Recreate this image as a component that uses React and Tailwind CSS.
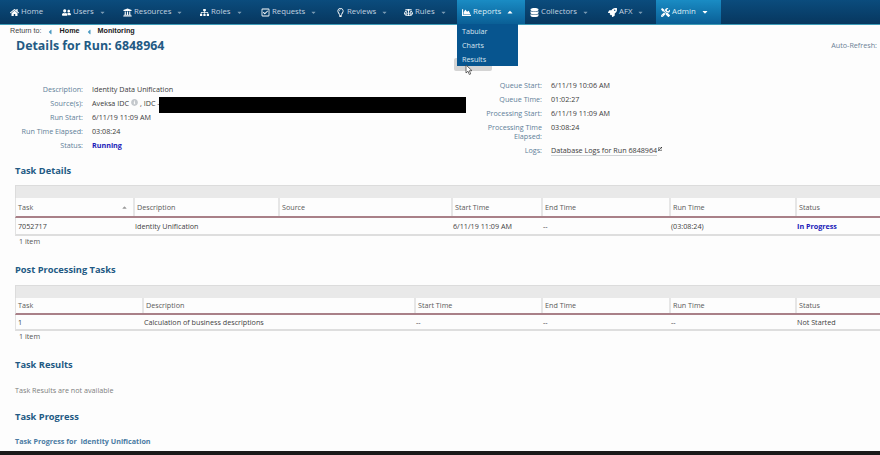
import React from 'react';
import {
  FaHome, FaUserFriends, FaUniversity, FaSitemap, FaRegCheckSquare, FaRegLightbulb,
  FaBalanceScale, FaChartArea, FaDatabase, FaRocket, FaTools, FaCaretDown, FaCaretUp, FaCaretLeft,
  FaInfoCircle, FaExternalLinkAlt,
} from 'react-icons/fa';

const navItems = [
  { label: 'Home', icon: FaHome, width: 'w-[52px]', noCaret: true },
  { label: 'Users', icon: FaUserFriends, width: 'w-[61px]' },
  { label: 'Resources', icon: FaUniversity, width: 'w-[77px]' },
  { label: 'Roles', icon: FaSitemap, width: 'w-[61px]' },
  { label: 'Requests', icon: FaRegCheckSquare, width: 'w-[75px]' },
  { label: 'Reviews', icon: FaRegLightbulb, width: 'w-[68px]' },
  { label: 'Rules', icon: FaBalanceScale, width: 'w-[58px]' },
  { label: 'Reports', icon: FaChartArea, width: 'w-[68px]', active: true, open: true },
  { label: 'Collectors', icon: FaDatabase, width: 'w-[78px]' },
  { label: 'AFX', icon: FaRocket, width: 'w-[53px]' },
  { label: 'Admin', icon: FaTools, width: 'w-[65px]', active: true },
];

const leftMeta = [
  ['Description:', 'Identity Data Unification'],
  ['Source(s):', 'source'],
  ['Run Start:', '6/11/19 11:09 AM'],
  ['Run Time Elapsed:', '03:08:24'],
  ['Status:', 'Running'],
];

const rightMeta = [
  ['Queue Start:', '6/11/19 10:06 AM'],
  ['Queue Time:', '01:02:27'],
  ['Processing Start:', '6/11/19 11:09 AM'],
  ['Processing Time\nElapsed:', '03:08:24', 'h-[23px]'],
  ['Logs:', 'logs'],
];

const NavItem = ({ item }) => {
  const Icon = item.icon;
  return (
    <div className={`${item.width} h-full shrink-0 flex items-center pl-[5px] gap-[2px] text-[7.8px] ${item.active ? 'bg-gradient-to-b from-[#1a8cc4] to-[#0a5f96] text-[#dcecf6]' : 'text-[#c3d3e0]'}`}>
      <Icon className="text-[9px] text-white" />
      <span>{item.label}</span>
      {!item.noCaret && (item.active
        ? (item.open
          ? <FaCaretUp className="text-[8px] text-white ml-[3px]" />
          : <FaCaretDown className="text-[8px] text-white ml-[3px]" />)
        : <FaCaretDown className="text-[7px] text-[#7c9cb5] ml-[3px]" />)}
    </div>
  );
};

const MetaValue = ({ value }) => {
  if (value === 'source') {
    return (
      <div className="flex items-start whitespace-nowrap">
        <span>Aveksa IDC</span>
        <FaInfoCircle className="text-[7px] text-[#c4c8cc] mx-[2px] mt-[1px] shrink-0" />
        <span>, IDC -</span>
        <div className="h-4 w-[307px] bg-black -ml-[1px] -mt-[1px]"></div>
      </div>
    );
  }
  if (value === 'logs') {
    return (
      <div className="flex items-start">
        <span className="border-b border-[#cfd3d6]">Database Logs for Run 6848964</span>
        <FaExternalLinkAlt className="text-[4px] text-[#333333] ml-[1px] mt-[2px]" />
      </div>
    );
  }
  if (value === 'Running') return <span className="font-bold text-[#2019b8]">Running</span>;
  return <span>{value}</span>;
};

const Meta = ({ rows, labelWidth }) => (
  <div className="flex flex-col">
    {rows.map(([label, value, height]) => (
      <div key={label} className={`flex ${height || 'h-[14px]'}`}>
        <div className={`${labelWidth} shrink-0 text-right whitespace-pre-line text-[#5f7f99] leading-[9px] pt-[1px]`}>{label}</div>
        <div className="ml-[9px] text-[#3c3c3c] leading-[10px]">
          <MetaValue value={value} />
        </div>
      </div>
    ))}
  </div>
);

const DataTable = ({ cols, columns, row, sortable, headerHeight, rowHeight }) => (
  <div className="ml-[15px]">
    <div className="h-[13px] bg-[#e9e9e9] border-t border-l border-[#dcdcdc]"></div>
    <div className={`grid ${cols} ${headerHeight} items-center border-l border-[#e2e2e2] border-b-2 border-b-[#a98088] text-[#5a5a5a]`}>
      {columns.map((c, i) => (
        <div key={c} className={`h-full flex items-center px-[2px] ${i > 0 ? 'border-l-2 border-[#e6e6e6]' : ''}`}>
          <span>{c}</span>
          {sortable && i === 0 && <FaCaretUp className="text-[7px] text-[#9a9a9a] ml-auto mr-[3px]" />}
        </div>
      ))}
    </div>
    <div className={`grid ${cols} ${rowHeight} items-center border-l border-[#e2e2e2] border-b-2 border-b-[#dedede] text-[#3f3f3f]`}>
      {row.map((c, i) => (
        <div key={i} className={`px-[2px] ${c === 'In Progress' ? 'font-bold text-[#2019b8]' : ''}`}>{c}</div>
      ))}
    </div>
    <div className="pl-[4px] text-[#555555] leading-[10px]">1 item</div>
  </div>
);

const Heading = ({ children, className }) => (
  <h2 className={`ml-[15px] text-[9.3px] leading-[12px] font-bold text-[#235a84] ${className}`}>{children}</h2>
);

const App = () => {
  return (
    <div className="relative w-[880px] h-[455px] overflow-hidden bg-[#fdfdfd] font-['Open_Sans',sans-serif] text-[7.2px] flex flex-col">
      <nav className="h-[25px] shrink-0 flex pl-[5px] bg-gradient-to-b from-[#0b4c7d] to-[#07375f] border-b border-[#3d9cb8]">
        {navItems.map((item) => <NavItem key={item.label} item={item} />)}
      </nav>

      <div className="flex items-center h-[11px] mt-[1px] pl-[10px] font-['Liberation_Sans',sans-serif] text-[#444444]">
        <span>Return to:</span>
        <FaCaretLeft className="text-[8px] text-[#4b9ac2] ml-[4px] mr-[6px]" />
        <span className="font-bold text-[#222222]">Home</span>
        <FaCaretLeft className="text-[8px] text-[#4b9ac2] ml-[5px] mr-[5px]" />
        <span className="font-bold text-[#222222]">Monitoring</span>
      </div>

      <div className="flex items-start justify-between">
        <h1 className="ml-[16px] text-[12.4px] leading-[18px] font-bold text-[#235a84]">Details for Run: 6848964</h1>
        <span className="mt-[3px] mr-[3px] text-[#6c8296] whitespace-nowrap">Auto-Refresh:</span>
      </div>

      <div className="flex mt-[25px] h-[81px]">
        <div className="w-[400px] pt-[4px]">
          <Meta rows={leftMeta} labelWidth="w-[83px]" />
        </div>
        <div>
          <Meta rows={rightMeta} labelWidth="w-[142px]" />
        </div>
      </div>

      <Heading className="mt-[4px]">Task Details</Heading>

      <div className="mt-[8px]">
        <DataTable
          cols="grid-cols-[117px_145px_173px_90px_128px_126px_85px]"
          columns={['Task', 'Description', 'Source', 'Start Time', 'End Time', 'Run Time', 'Status']}
          row={['7052717', 'Identity Unification', '', '6/11/19 11:09 AM', '--', '(03:08:24)', 'In Progress']}
          sortable
          headerHeight="h-[20px]"
          rowHeight="h-[18px]"
        />
      </div>

      <Heading className="mt-[18px]">Post Processing Tasks</Heading>

      <div className="mt-[9px]">
        <DataTable
          cols="grid-cols-[126px_272px_127px_128px_126px_85px]"
          columns={['Task', 'Description', 'Start Time', 'End Time', 'Run Time', 'Status']}
          row={['1', 'Calculation of business descriptions', '--', '--', '--', 'Not Started']}
          headerHeight="h-[17px]"
          rowHeight="h-[16px]"
        />
      </div>

      <Heading className="mt-[18px]">Task Results</Heading>
      <p className="ml-[15px] mt-[14px] leading-[10px] text-[#7d7d7d]">Task Results are not available</p>
      <Heading className="mt-[16px]">Task Progress</Heading>
      <p className="ml-[15px] mt-[13px] leading-[10px] font-bold text-[#4a7ba3]">Task Progress for&nbsp; Identity Unification</p>

      <div className="mt-auto h-[4px] bg-[#1a1a1a]"></div>

      {/* open Reports menu and the button showing behind it */}
      <div className="absolute left-[454px] top-[58px] w-[38px] h-[13px] bg-[#d4d4d4] rounded-[2px]"></div>
      <div className="absolute left-[457px] top-[24px] w-[61px] h-[42px] bg-[#07558f] text-[#d9e6f0] flex flex-col pl-[5px]">
        <span className="h-[14px] leading-[14px]">Tabular</span>
        <span className="h-[14px] leading-[14px]">Charts</span>
        <span className="h-[14px] leading-[14px]">Results</span>
      </div>
      <svg className="absolute left-[465px] top-[64px]" width="8" height="12" viewBox="0 0 8 12">
        <path d="M1 1v8l2-1.8 1.3 3.3 1.4-.6-1.3-3.2H7z" fill="#ffffff" stroke="#444444" strokeWidth="0.8" />
      </svg>
    </div>
  );
};

export default App;
